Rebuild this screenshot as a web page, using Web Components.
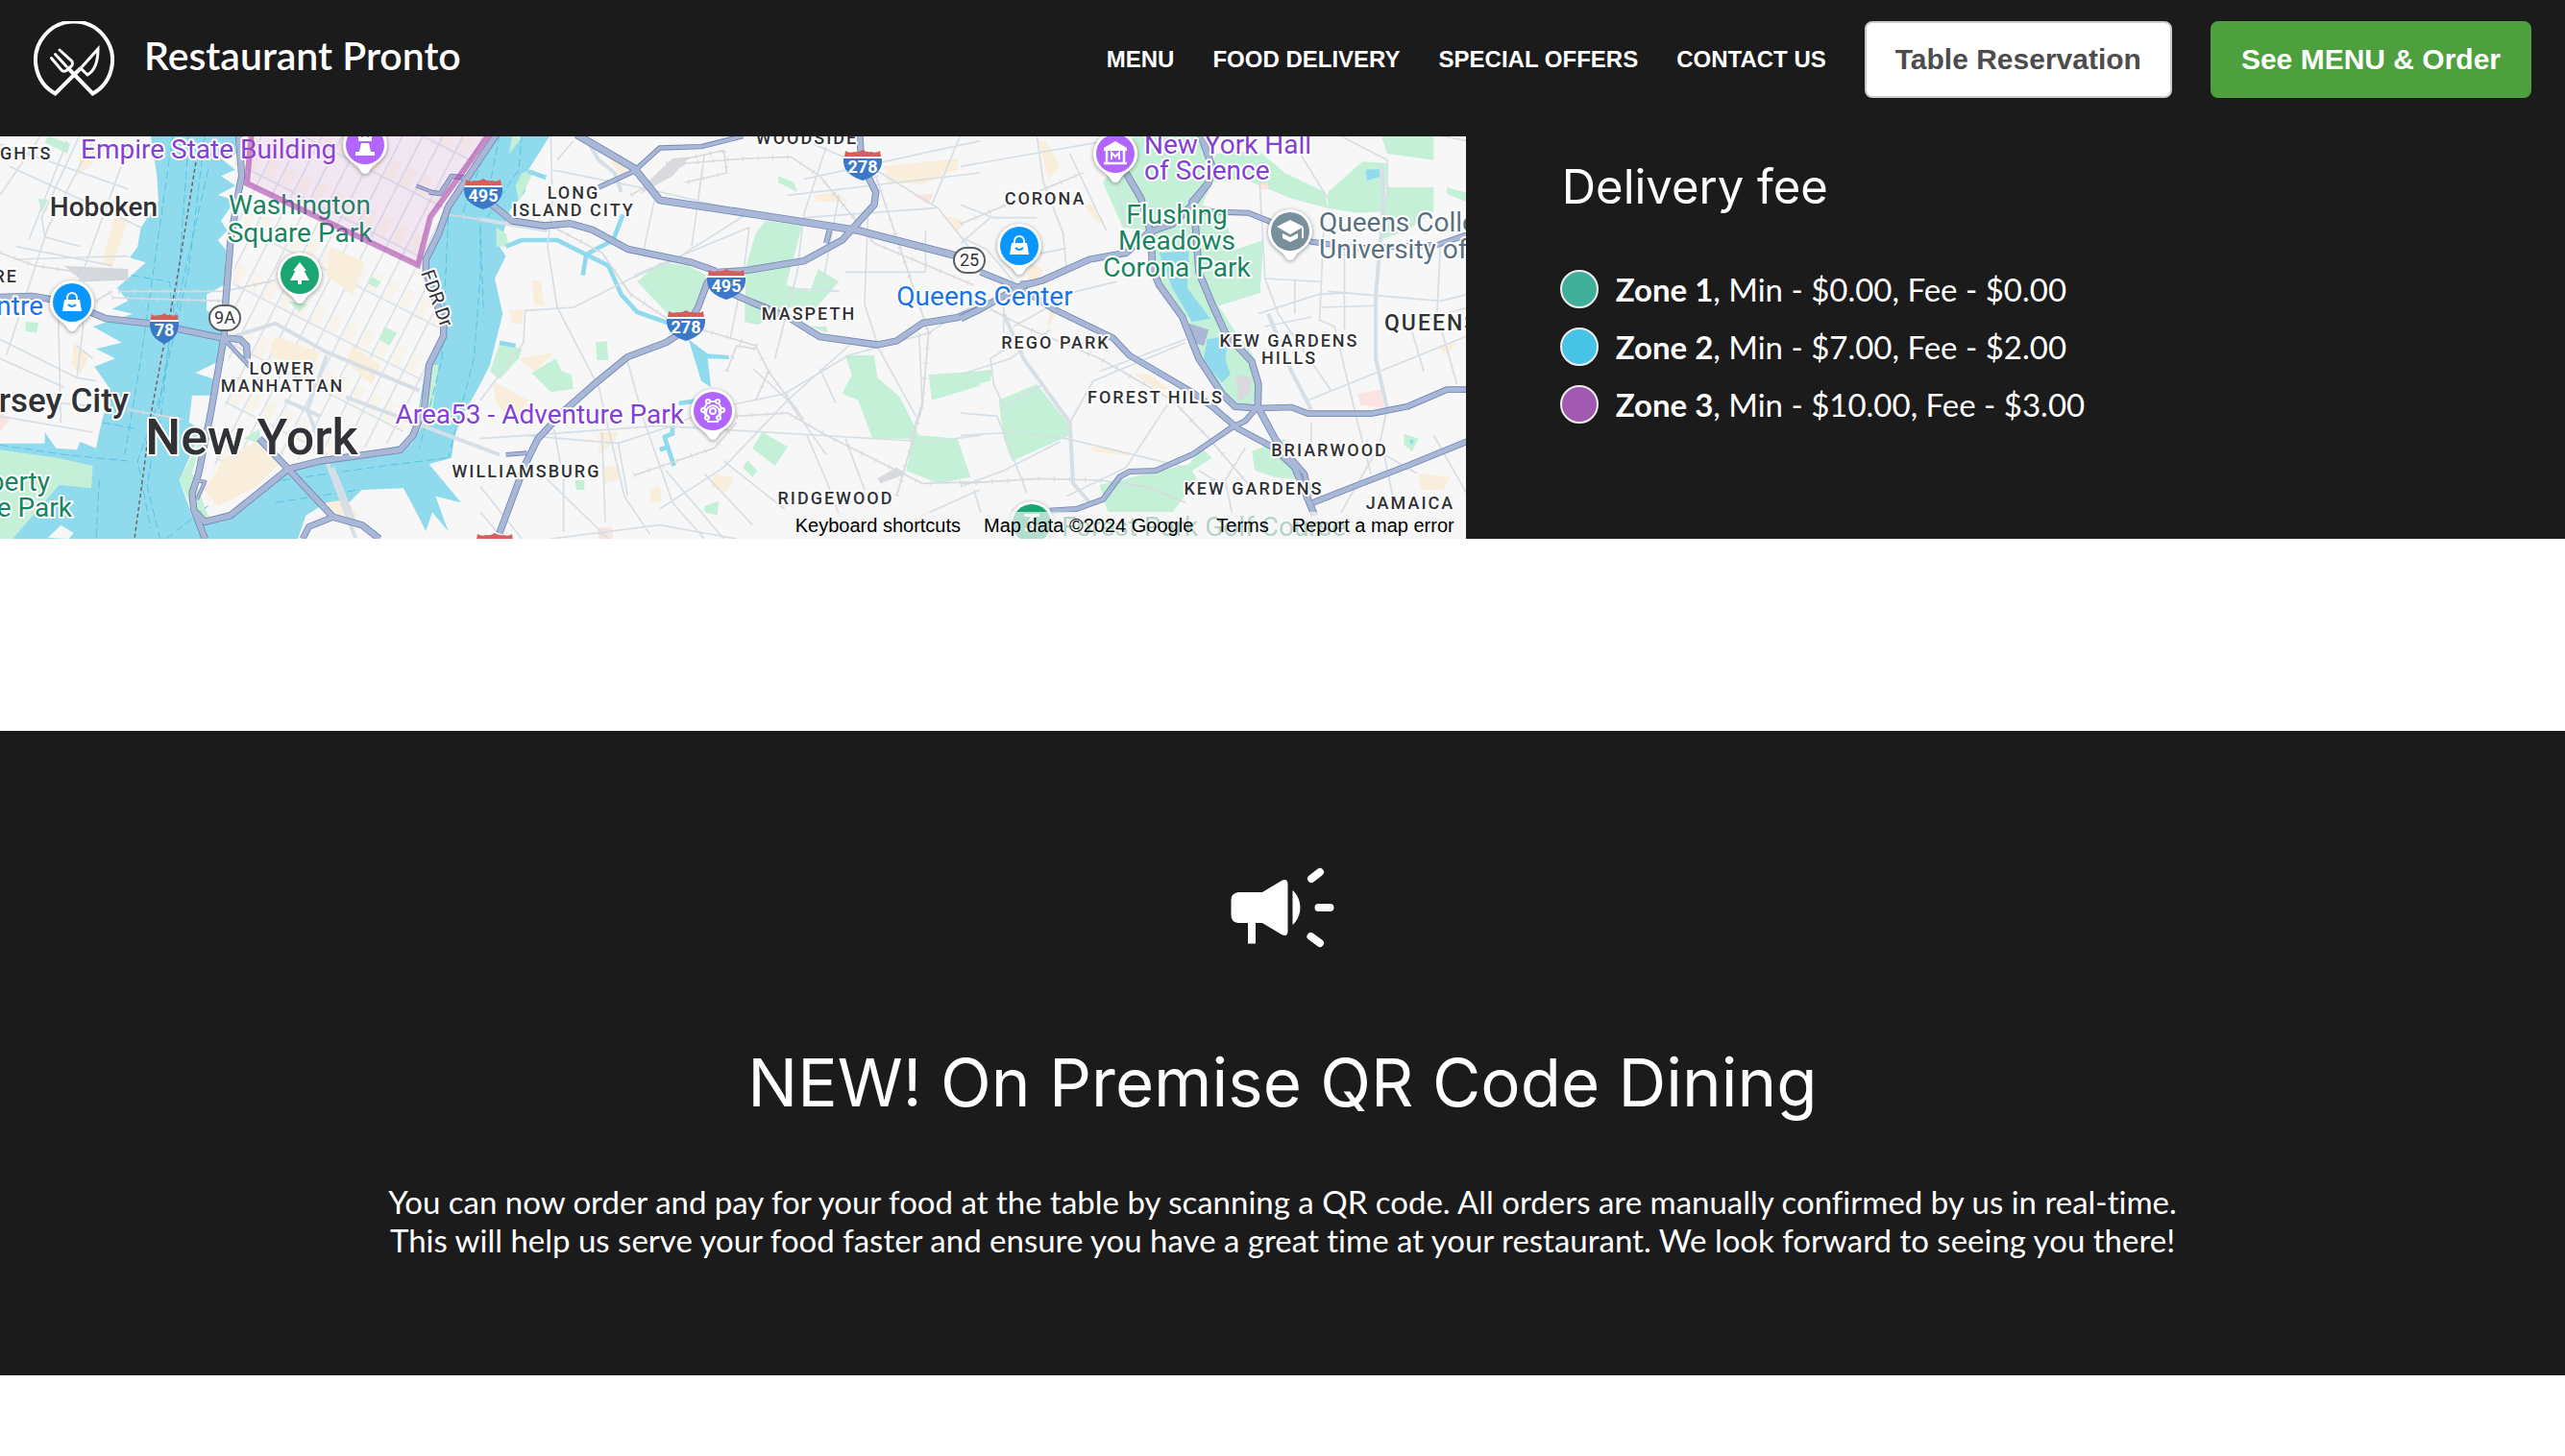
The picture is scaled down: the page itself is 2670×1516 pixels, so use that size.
<!DOCTYPE html>
<html lang="en">
<head>
<meta charset="utf-8">
<title>Restaurant Pronto</title>
<style>
    body {
        margin: 0;
        background: #fff;
        color: #fff;
        font-family: Lato, "Open Sans", sans-serif;
        font-variant-ligatures: none;
    }
</style>
</head>
<body>

<site-header>
    <nav-link href="#menu">MENU</nav-link>
    <nav-link href="#delivery">FOOD DELIVERY</nav-link>
    <nav-link href="#offers">SPECIAL OFFERS</nav-link>
    <nav-link href="#contact">CONTACT US</nav-link>
    <action-button>Table Reservation</action-button>
    <action-button kind="primary">See MENU &amp; Order</action-button>
</site-header>

<delivery-section>
    <delivery-map slot="map"></delivery-map>
    <delivery-zone color="#41b09b" name="Zone 1">Min - $0.00, Fee - $0.00</delivery-zone>
    <delivery-zone color="#46c3e5" name="Zone 2">Min - $7.00, Fee - $2.00</delivery-zone>
    <delivery-zone color="#a259b2" name="Zone 3">Min - $10.00, Fee - $3.00</delivery-zone>
</delivery-section>

<promo-section>
    <span slot="title">NEW! On Premise QR Code Dining</span>
    You can now order and pay for your food at the table by scanning a QR code. All orders are manually confirmed by us in real-time.<br>
    This will help us serve your food faster and ensure you have a great time at your restaurant. We look forward to seeing you there!
</promo-section>

<script>
class SiteHeader extends HTMLElement {

    constructor() {
        super();
        this.attachShadow({ mode: "open" });
    }

    connectedCallback() {
        this.render();
    }

    style() {
        return `
            :host {
                display: block;
                background: #1b1b1b;
            }
            header {
                display: flex;
                align-items: flex-start;
                justify-content: space-between;
                padding: 22px 35px 40px;
            }
            .brand {
                display: flex;
                gap: 31px;
                color: #fff;
                text-decoration: none;
                font-size: 41px;
                font-weight: 600;
                line-height: 72px;
            }
            .brand svg {
                width: 84px;
                height: 80px;
            }
            nav {
                display: flex;
                align-items: center;
                gap: 40px;
            }
        `;
    }

    render() {
        this.shadowRoot.innerHTML = `
            <style>${this.style()}</style>
            <header>
                <a class="brand" href="#">
                    <svg viewBox="35 22 84 80" fill="none" stroke="#fff" stroke-width="3" aria-hidden="true">
                        <path stroke-width="4" d="M84 71 L57.500 97.500 A40 40 0 1 1 96.500 97.500 L70 70"/>
                        <path d="M84 71 L102 51 C102 64 98 74 91 78 L84 71"/>
                        <path stroke-linecap="round" d="M53.500 60.500 L64 73 Q67 76 71 72 L75 68 Q76 66 75 64 L62 52 M57.500 56.500 L69 69"/>
                    </svg>
                    <span>Restaurant Pronto</span>
                </a>
                <nav><slot></slot></nav>
            </header>
        `;
    }
}

class NavLink extends HTMLElement {

    connectedCallback() {
        this.attachShadow({ mode: "open" }).innerHTML = `
            <style>
                :host { display: block; }
                a {
                    display: block;
                    color: #fff;
                    text-decoration: none;
                    font: bold 24px/80px "Liberation Sans", Arial, sans-serif;
                    white-space: nowrap;
                }
            </style>
            <a href="${this.getAttribute("href")}"><slot></slot></a>
        `;
    }
}

class ActionButton extends HTMLElement {

    connectedCallback() {
        this.attachShadow({ mode: "open" }).innerHTML = `
            <style>
                :host { display: block; }
                button {
                    display: block;
                    box-sizing: border-box;
                    height: 80px;
                    padding: 0 30px;
                    border: 2px solid #ccc;
                    border-radius: 8px;
                    background: #fff;
                    color: #4d4d4d;
                    font: bold 30px "Liberation Sans", Arial, sans-serif;
                    white-space: nowrap;
                    cursor: pointer;
                }
                :host([kind="primary"]) button {
                    border-color: #4ea03e;
                    background: #4ea03e;
                    color: #fff;
                }
            </style>
            <button type="button"><slot></slot></button>
        `;
    }
}

class DeliverySection extends HTMLElement {

    connectedCallback() {
        this.attachShadow({ mode: "open" }).innerHTML = `
            <style>
                :host {
                    display: grid;
                    grid-template-columns: 4fr 3fr;
                    background: #1b1b1b;
                }
                .info {
                    padding: 20px 98px;
                }
                h2 {
                    margin: 0 0 53px;
                    padding-left: 2px;
                    font: 400 49px/66px Inter, sans-serif;
                }
                .zones {
                    display: grid;
                    gap: 20px;
                }
            </style>
            <slot name="map"></slot>
            <div class="info">
                <h2>Delivery fee</h2>
                <div class="zones"><slot></slot></div>
            </div>
        `;
    }
}

class DeliveryZone extends HTMLElement {

    connectedCallback() {
        this.attachShadow({ mode: "open" }).innerHTML = `
            <style>
                :host {
                    display: flex;
                    align-items: center;
                    gap: 18px;
                    font-size: 33px;
                    line-height: 40px;
                }
                .dot {
                    box-sizing: border-box;
                    width: 40px;
                    height: 40px;
                    border: 2px solid #eee;
                    border-radius: 50%;
                    background: ${this.getAttribute("color")};
                }
            </style>
            <span class="dot"></span>
            <span><b>${this.getAttribute("name")}</b>, <slot></slot></span>
        `;
    }
}

class PromoSection extends HTMLElement {

    connectedCallback() {
        this.attachShadow({ mode: "open" }).innerHTML = `
            <style>
                :host {
                    display: flex;
                    flex-direction: column;
                    align-items: center;
                    margin-top: 200px;
                    padding: 124px 40px 121px;
                    background: #1b1b1b;
                    text-align: center;
                }
                svg {
                    width: 120px;
                    height: 120px;
                }
                h2 {
                    margin: 74px 0 56px;
                    font: 400 69px/96px Inter, sans-serif;
                }
                p {
                    margin: 0;
                    font-size: 33px;
                    line-height: 40px;
                }
            </style>
            <svg viewBox="1275 885 120 120" fill="#fff" aria-hidden="true">
                <path d="M1289 929 H1314 L1334 917 Q1340 914 1340.500 920 V970 Q1340 976 1334 973 L1314 961 H1307 V982.500 H1299 V961 H1289 Q1281.500 960 1281.500 953 V937 Q1281.500 930 1289 929 Z"/>
                <path d="M1345.500 927 C1356 936 1356 954 1345.500 963 Z"/>
                <path fill="none" stroke="#fff" stroke-width="8" stroke-linecap="round" d="M1365 915 L1374 908 M1372.500 945 H1384.500 M1364.500 975 L1374 982"/>
            </svg>
            <h2><slot name="title"></slot></h2>
            <p><slot></slot></p>
        `;
    }
}

// Glyphs are drawn round the centre of the pin head
const PIN_GLYPHS = {
    tree: `<path d="M0 -13 L7 -4 H4.500 L10 6 H2 V10 H-2 V6 H-10 L-4.500 -4 H-7 Z"/>`,
    bag: `<path d="M-8 -3 H8 L10 9 H-10 Z"/><path fill="none" stroke="#fff" stroke-width="2" d="M-5 -3 V-5 A5 5 0 0 1 5 -5 V-3"/><path fill="none" stroke="var(--pin)" stroke-width="2" d="M-4 2 Q0 6 4 2"/>`,
    rook: `<path d="M-7 -12 H-4 V-8 H-2 V-12 H2 V-8 H4 V-12 H7 V-4 H-7 Z M-4 -2 H4 L6 7 H10 V11 H-10 V7 H-6 Z"/>`,
    wheel: `<g fill="none" stroke="#fff" stroke-width="2"><path d="M-4 7 A7 7 0 1 1 4 7"/><circle r="3"/><circle cx="-5" cy="-10" r="2"/><circle cx="5" cy="-10" r="2"/><circle cx="-10" cy="-1" r="2"/><circle cx="10" cy="-1" r="2"/><circle cx="-6" cy="7" r="2"/><circle cx="6" cy="7" r="2"/><path d="M-3 -10 H3 M-6 -8 L-9 -3 M6 -8 L9 -3 M-9 1 L-7 5 M9 1 L7 5 M-6 11 H6"/></g>`,
    museum: `<g fill="none" stroke="#fff" stroke-width="2.500"><path d="M-9 -3 V9 M9 -3 V9 M-12 10 H12"/><path stroke-width="2" d="M-4 6 V-1 L0 3 L4 -1 V6"/></g><path d="M-12 -6 L0 -13 L12 -6 V-3 H-12 Z"/>`,
    college: `<path d="M-14 -5 L0 -12 L14 -5 L0 3 Z M-8 2 L0 6 L8 2 V7 L0 11 L-8 7 Z M12 -4 H14 V7 H12 Z"/>`,
    golf: `<path d="M-8 -10 H8 V-7 H3 L0 -3 L6 3 V8 H-7 V5 H2 L-4 -2 L-1 -7 H-8 Z"/>`
};

class MapPin extends HTMLElement {

    connectedCallback() {
        this.attachShadow({ mode: "open" }).innerHTML = `
            <style>
                :host {
                    position: absolute;
                    width: 60px;
                    height: 64px;
                    margin: -30px 0 0 -30px;
                }
                svg {
                    display: block;
                    filter: drop-shadow(0 1px 2px rgba(0, 0, 0, .4));
                }
            </style>
            <svg width="60" height="64" viewBox="-30 -30 60 64" style="--pin: ${this.getAttribute("color")}" aria-hidden="true">
                <path fill="#fff" d="M0 30 C-3 30 -4 28 -6 25 C-10 19 -23 15 -23 0 A23 23 0 0 1 23 0 C23 15 10 19 6 25 C4 28 3 30 0 30 Z"/>
                <circle r="20" fill="var(--pin)"/>
                <g fill="#fff">${PIN_GLYPHS[this.getAttribute("glyph")]}</g>
            </svg>
        `;
    }
}

class RoadShield extends HTMLElement {

    connectedCallback() {
        const num = this.getAttribute("num");
        const wide = num.length > 2;
        this.attachShadow({ mode: "open" }).innerHTML = `
            <style>
                :host {
                    position: absolute;
                    width: 40px;
                    height: 32px;
                    margin: -16px 0 0 -20px;
                }
                svg { display: block; }
                text {
                    font: bold 18px Roboto, sans-serif;
                    text-anchor: middle;
                }
                .state { font-weight: 400; }
            </style>
            <svg width="40" height="32" viewBox="-20 -16 40 32">
                ${this.hasAttribute("state") ? `
                    <rect x="-16" y="-13" width="32" height="26" rx="13" fill="#fff" stroke="#5c6166" stroke-width="2"/>
                    <text class="state" y="6" fill="#333">${num}</text>
                ` : `
                    <g transform="scale(${wide ? 1 : 0.75} 1)">
                        <path fill="#d65d5a" d="M-18 -15 Q-14 -12 -9 -14 Q-4 -13 0 -16 Q4 -13 9 -14 Q14 -12 18 -15 L19 -9 H-19 Z"/>
                        <path fill="#fff" d="M-19 -9 H19 L20 -6 H-20 Z"/>
                        <path fill="#3b78c8" d="M-20 -7 H20 C21 6 12 12 0 16 C-12 12 -21 6 -20 -7 Z"/>
                    </g>
                    <text y="8" fill="#fff">${num}</text>
                `}
            </svg>
        `;
    }
}

// The canvas is drawn in three tiles, three units to the pixel
const TILES = [
    {
        place: "translate(0 -2) scale(.33333)",
        shapes: [
            ["#90daee", "470,0 490,130 495,210 440,290 430,350 405,385 455,400 410,440 365,480 400,520 350,545 415,560 290,600 380,650 300,670 360,700 295,725 340,790 330,850 310,930 300,980 250,960 240,985 175,980 140,930 140,965 0,965 0,1263 930,1263 955,1190 1020,1150 1090,1150 1130,1110 1260,1105 1300,1180 1330,1240 1350,1180 1400,1240 1360,1130 1440,1150 1340,1030 1410,1010 1420,940 1450,870 1505,770 1530,720 1570,560 1545,450 1580,380 1560,350 1590,240 1640,180 1650,110 1720,0"],
            ["#c3f0d6", "0,985 180,1010 290,1035 285,1105 185,1095 40,1263 0,1263"],
            ["#f7f7f7", "735,0 740,60 690,75 735,110 690,130 735,160 680,190 735,205 690,270 710,300 680,330 705,360 700,470 645,500 645,550 695,570 690,640 680,710 610,745 670,765 660,815 600,815 590,900 630,920 560,1080 600,1190 640,1200 700,1195 860,1080 900,1040 1100,1000 1260,970 1300,900 1320,780 1375,640 1380,590 1325,420 1370,330 1400,230 1560,0"],
            ["url(#blocks)", "735,0 735,350 720,600 700,900 640,1170 900,1020 1240,960 1310,840 1370,620 1330,400 1400,200 1560,0"],
            ["#f7f7f7", "150,1260 190,1220 230,1245 215,1263"],
            ["#c3f0d6", "1340,720 1370,720 1350,860 1280,975 1310,850"],
            ["#c3f0d6", "560,1080 640,920 600,1060 650,1190 700,1210 620,1215"],
            ["#c3f0d6", "900,520 960,530 935,555"],
            ["#c3f0d6", "1200,600 1240,620 1215,660 1185,640"],
            ["#c3f0d6", "1055,385 1080,400 1060,430 1040,420"],
            ["#c3f0d6", "1160,445 1190,460 1175,480 1150,465"],
            ["#c3f0d6", "80,585 120,588 115,620 80,615"],
            ["#c3f0d6", "150,5 220,30 210,60 140,25"],
            ["#c3f0d6", "120,200 150,205 130,245"],
            ["#c3f0d6", "760,950 810,920 815,965"],
            ["#f8eedb", "640,1110 700,1010 800,960 870,1030 800,1100 680,1160"],
            ["#f8eedb", "860,630 1000,680 960,760 840,680"],
            ["#f8eedb", "1030,350 1140,400 1100,500 1020,440"],
            ["#f8eedb", "1100,660 1190,720 1160,780 1080,710"],
            ["#f8eedb", "370,210 410,230 350,420 320,400"],
            ["#f8eedb", "250,60 300,20 290,90 240,130"],
            ["#f8eedb", "230,650 280,690 250,750 225,720"],
            ["#f8eedb", "1020,1150 1080,1140 1120,1190 1050,1200"],
            ["#d4d7dc", "200,410 400,420 400,455 260,460"],
            ["#fbe3e2", "0,860 30,890 0,930"]
        ],
        streets: "M130 0 L0 190 M210 20 L90 330 M300 0 L150 290 L20 690 M250 0 L130 260 L140 320 L250 350 M400 40 L240 480 L260 600 L240 760 M0 30 L400 170 M30 100 L440 290 M50 350 L350 410 M50 390 L400 380 M0 700 L200 790 M180 480 L190 900 M0 640 L240 760 L300 770 M0 820 L300 850 M0 880 L290 930 M240 660 L290 700",
        wide: "M700 640 L860 590 L1020 680 L1310 800 M1020 690 L960 860 L1110 1260 M890 830 L1000 880 M1080 820 L1560 1000 M1040 1040 L1110 1220",
        rail: "M0 370 L110 410 L310 440 M370 490 L700 490 M350 510 L700 520 M700 490 L860 455 M1400 250 L1560 275 M300 520 L350 490 M400 860 L570 890",
        ferry: "M540 0 L440 700 L390 1000 M590 0 L560 420 L520 700 L460 1100 L500 1263 M640 0 L590 420 L500 820 L430 1020 L470 1230 M650 110 L530 640 L500 900 M0 970 L200 1000 L400 1020 M410 440 L530 460 L540 620 M1400 260 L1380 700 L1310 980 M1500 280 L1500 440 L1480 700 L1400 1010 M1520 40 L1440 260 M880 1080 L1200 1035 L1400 1010 M520 1263 L650 1160 M860 1150 L1120 1110 M320 900 L430 920 M310 1080 L300 1263",
        roads: [
            [20, "745,0 755,130 745,180 720,330 705,520 700,630 660,860 620,1060 600,1120 605,1170 640,1263"],
            [20, "0,508 100,505 160,515 260,545 330,575 480,592 690,635 750,640 770,660 772,700"],
            [12, "705,645 780,725"],
            [20, "1550,0 1400,225 1370,310 1330,390 1330,430 1385,590 1385,630 1340,720 1325,850 1290,940 1250,985 1000,1020 900,1045 720,1190 640,1210 605,1175"],
            [20, "810,950 900,1045 1040,1195 1130,1220 1185,1263"],
            [18, "945,1263 965,1225 1040,1195"],
            [14, "1340,180 1375,185 1410,130 1450,135"],
            [10, "1300,160 1350,180"],
            [10, "605,1080 640,1085 615,1140"]
        ]
    },
    {
        place: "translate(500 -2) scale(.33333)",
        shapes: [
            ["#c3f0d6", "490,460 560,400 650,410 705,440 670,560 590,565"],
            ["#c3f0d6", "890,270 1005,285 955,470 1030,490 1055,420 1120,460 1050,540 940,540 870,595 825,585 830,410 860,310"],
            ["#c3f0d6", "1140,690 1230,690 1240,760 1310,820 1370,940 1490,950 1530,1070 1430,1090 1330,1050 1350,950 1225,950 1180,830 1130,810 1160,750"],
            ["#c3f0d6", "1400,750 1560,740 1560,785 1410,830"],
            ["#c3f0d6", "160,745 235,700 255,740 285,750 290,795 220,805"],
            ["#c3f0d6", "360,650 395,645 400,705 365,705"],
            ["#c3f0d6", "60,655 130,670 120,700 60,765 30,740"],
            ["#c3f0d6", "880,930 960,975 920,1035 850,980"],
            ["#c3f0d6", "820,1040 835,1018 865,1050 850,1070"],
            ["#c3f0d6", "295,1080 325,1080 325,1110 300,1110"],
            ["#c3f0d6", "700,1160 745,1145 740,1190 700,1180"],
            ["#c3f0d6", "930,130 980,150 990,180 930,150"],
            ["#c3f0d6", "1030,600 1080,600 1085,620"],
            ["#c3f0d6", "130,120 170,110 120,210 110,160"],
            ["#c3f0d6", "50,290 80,310 90,350 50,350"],
            ["#c3f0d6", "100,0 130,10 90,60"],
            ["#f8eedb", "1260,100 1490,75 1490,110 1380,155 1270,150"],
            ["#f8eedb", "1040,190 1110,180 1150,210 1050,210"],
            ["#f8eedb", "1440,250 1510,270 1490,310"],
            ["#f8eedb", "400,80 460,90 450,140"],
            ["#f8eedb", "160,455 190,460 200,540 170,530"],
            ["#f8eedb", "40,770 150,830 110,910 50,840"],
            ["#f8eedb", "120,700 230,680 170,740"],
            ["#f8eedb", "370,930 430,930 420,960 370,1000"],
            ["#f8eedb", "730,1060 790,1070 770,1120 720,1100"],
            ["#f8eedb", "380,1040 435,1035 430,1080 385,1090"],
            ["#f8eedb", "530,1110 560,1100 565,1150 530,1150"],
            ["#f8eedb", "90,550 135,545 130,590 100,590"],
            ["#fbe3e2", "365,1230 410,1225 415,1263 370,1263"],
            ["#fbe3e2", "1350,190 1415,185 1400,220"],
            ["#d8dade", "520,150 600,75 655,70 600,130 500,185"],
            ["#d8dade", "1240,1075 1300,1040 1330,1060 1250,1090"],
            ["#90daee", "650,640 710,685 775,690 778,702 710,700 720,790 690,770"]
        ],
        streets: "M220 0 L225 220 L210 350 L240 540 L370 790 L450 1130 L530 1250 M290 20 L240 80 M220 110 L520 170 L860 250 M0 830 L135 650 L140 550 L290 540 L470 450 L600 395 L830 250 M480 440 L840 290 L820 440 L780 640 M545 200 L510 360 M700 60 L660 350 M1080 40 L1010 250 L990 430 L920 700 M1040 30 L1250 120 L1430 230 L1540 370 M1010 140 L1560 20 M960 190 L1560 120 M1010 260 L1420 230 M1120 190 L1070 460 M1210 260 L1200 530 L1245 670 L1360 880 M960 480 L1120 490 M1140 430 L1390 430 L1390 300 M1560 520 L1400 620 L1150 690 L950 810 L760 850 M1150 660 L960 830 L760 1040 L560 1170 M140 940 L430 965 L600 910 L760 840 M0 950 L560 910 L1400 960 L1560 940 M380 930 L390 1210 M460 710 L510 890 L600 1150 L700 1263 M230 920 L260 1080 L260 1240 M140 1010 L400 1263 M0 1100 L130 1263 M0 1180 L70 1263 M430 960 L460 1130 M700 1060 L850 1220 M760 1020 L950 1170 M580 1050 L760 1263 M1020 940 L1080 1080 L1140 1240 M1140 950 L1200 1110 M1060 730 L1110 840 M850 730 L960 830 L1080 1000 M1380 1190 L1560 1110 M220 1263 L560 1220 L800 1263 M1370 620 L1380 840 L1340 960 M1500 0 L1410 220",
        wide: "M340 30 L370 80 L420 120 L440 180 M340 30 L400 60 M210 300 L0 265",
        rail: "M470 190 L640 90 L830 75 L970 70 L1060 130 L1230 340 L1540 470 M580 90 L760 50 L770 120 L640 150 M230 290 L380 370 L470 500 L590 580 L760 630 L860 660 L900 740 L860 830 M800 880 L960 870 L1080 940 L1380 1090 L1560 1085 M480 1065 L730 980 L800 900 M900 740 L1010 890 M1235 130 L1400 620 L1380 850 L1300 1130 M770 740 L800 660 L860 670",
        creek: "M80 350 L130 330 L240 330 L330 375 L400 410 L440 500 L490 555 L590 590 M330 375 L415 330 L445 250 M320 440 L330 380 M600 880 L600 935 L575 945 L605 1035 M620 840 L690 830 M560 985 L590 975 M60 650 L110 660 M150 115 L205 135",
        ferry: "M0 290 L10 560 M60 0 L20 210 M130 0 L120 110 L20 260",
        roads: [
            [22, "300,0 480,105 560,205 860,250 1180,300 1490,380"],
            [14, "370,165 480,115 560,42 690,38 820,5"],
            [20, "1185,0 1190,90 1235,180 1230,220 1130,330 1010,395 830,425 740,430"],
            [20, "0,190 50,230 100,270 200,285 280,278 350,298 460,358 660,400 730,425 770,490 850,525 960,570 1060,632 1240,657 1300,645 1380,590 1490,572 1570,540"],
            [20, "760,430 710,460 680,540 640,610 580,650 460,695 350,785 260,865 180,950 140,1030 60,1245"],
            [16, "1080,340 1090,300"],
            [12, "80,1000 145,995"]
        ]
    },
    {
        place: "translate(1000 -2) scale(.34435 .33333)",
        shapes: [
            ["#c3f0d6", "430,150 530,0 740,0 760,150 730,220 790,240 830,360 915,330 905,495 780,535 820,600 890,700 895,830 850,860 780,800 720,700 690,580 600,450 560,300 490,290"],
            ["#c3f0d6", "770,60 900,50 980,120 1100,180 1110,230 1000,200 860,140 750,150"],
            ["#c3f0d6", "1110,180 1215,85 1290,90 1280,240 1200,245 1110,230"],
            ["#c3f0d6", "1270,0 1430,0 1430,80 1290,60"],
            ["#c3f0d6", "1290,165 1430,165 1430,240 1350,300 1265,330"],
            ["#c3f0d6", "1470,165 1540,185 1540,215 1470,185"],
            ["#c3f0d6", "115,830 230,780 330,910 330,940 155,1020 130,950"],
            ["#c3f0d6", "0,745 95,735 90,770 0,790"],
            ["#c3f0d6", "0,990 30,1070 0,1075"],
            ["#c3f0d6", "420,1095 560,1060 690,1030 730,980 760,1010 700,1050 715,1080 640,1180 445,1180"],
            ["#c3f0d6", "880,990 980,950 1040,1080 950,1070 890,1050"],
            ["#c3f0d6", "1340,935 1385,950 1365,990 1340,970"],
            ["#90daee", "600,370 690,365 685,480 755,575 700,585 640,480"],
            ["#90daee", "745,640 810,630 800,700 815,750 790,775 760,740 735,700"],
            ["#90daee", "1225,110 1275,108 1270,130 1228,145"],
            ["#90daee", "1355,955 1370,955 1365,970"],
            ["#d8dade", "830,750 880,760 875,810 840,835"],
            ["#fbe3e2", "1200,810 1270,797 1280,855 1210,845"],
            ["#fbe3e2", "900,155 930,150 930,170 905,172"],
            ["#f8eedb", "235,20 260,25 300,100 265,140"],
            ["#f8eedb", "370,220 400,220 435,275 420,280"],
            ["#f8eedb", "520,745 570,750 630,795 590,795"],
            ["#f8eedb", "390,975 480,985 510,1005 400,990"],
            ["#f8eedb", "210,400 250,420 240,460 200,450"],
            ["#f8eedb", "1385,1060 1480,1070 1460,1110 1390,1110"],
            ["#f8eedb", "1440,660 1500,650 1470,690"],
            ["#f8eedb", "270,540 290,550 260,620"],
            ["#aab8d6", "690,590 750,610 735,660 700,650"]
        ],
        streets: "M230 0 L250 150 L310 310 L320 420 M330 60 L440 300 M440 0 L500 290 M0 100 L440 20 M0 220 L100 260 L230 260 M0 320 L80 360 L160 460 M90 260 L0 340 M200 380 L320 355 M470 460 L350 490 L160 600 M130 540 L130 620 M270 610 L150 700 L0 750 M150 660 L90 700 L100 780 L130 850 L250 780 M0 940 L170 930 L320 950 L680 1040 M0 870 L110 880 L200 1120 M0 1100 L130 1050 L300 960 M40 1110 L60 1180 M320 1130 L500 1040 L640 820 M330 900 L400 770 L680 650 M420 740 L680 640 M900 80 L920 450 L960 560 L1120 800 M1010 450 L1010 560 M920 450 L1090 460 M1100 240 L1085 580 L1130 600 L1200 900 L1240 1060 M1110 490 L1450 520 L1530 500 M900 560 L1080 500 L1170 495 M1090 540 L1250 535 M1160 350 L1160 610 M920 600 L1060 570 M1450 350 L1440 560 L1500 780 M1050 830 L1530 630 M1360 600 L1400 740 M1260 1000 L1290 850 M1060 900 L1060 1000 M1350 600 L1530 540 M990 0 L1110 200 M1140 0 L1290 80 L1290 200 M1430 0 L1530 20 M1150 1180 L1250 1000 M1310 1150 L1280 1000 L1380 1060 M1430 940 L1540 1140 M820 1180 L800 1080 L860 980 M720 1050 L800 1100",
        wide: "M130 560 L190 700 L330 900 L340 1090 L390 1150 M1270 100 L1280 200 L1255 500 L1255 700 L1290 860 M930 560 L1000 740 L1060 860",
        rail: "M0 280 L160 210 L370 120 M90 545 L190 600 L420 700 L640 830 L760 960 L900 1130 M0 1090 L240 1075 L420 1080 L560 1100 L680 1150",
        roads: [
            [20, "0,575 60,545 180,475 250,455 390,390 500,370 570,305 640,280 700,220 750,150"],
            [18, "60,430 180,480 280,545 460,635 510,690 700,805 760,850 840,920 940,975 1020,1050"],
            [20, "500,120 545,200 575,310 580,420 600,470 670,570 720,700 790,810 830,850 900,855"],
            [20, "725,0 760,100 750,150 700,210 710,290 720,430 760,530 800,620 880,710 900,780 898,850 950,950 1010,1040 1070,1190"],
            [16, "990,1000 1040,1060 1055,1130"],
            [16, "730,240 870,245 930,270 1060,335 1200,355 1440,345 1540,310"],
            [18, "900,855 1000,852 1050,872 1240,872 1350,850 1470,797 1540,797"],
            [16, "270,1175 350,1170 430,1140 480,1070 510,1053 590,1050 700,1000 820,915 860,895 890,860"],
            [18, "1065,1150 1200,1095 1350,1035 1540,955"],
            [12, "180,465 225,460"]
        ]
    }
];

// [class, x, baseline, text, anchor]
const LABELS = [
    ["area", 0, 24, "GHTS"],
    ["poi purple", 84, 23, "Empire State Building"],
    ["town", 108, 83, "Hoboken", "middle"],
    ["poi green", 312, 81, "Washington", "middle"],
    ["poi green", 312, 110, "Square Park", "middle"],
    ["area", 19, 152, "RE", "end"],
    ["poi blue", 45, 186, "ntre", "end"],
    ["area", 294, 248, "LOWER", "middle"],
    ["area", 294, 266, "MANHATTAN", "middle"],
    ["city", 134, 287, "rsey City", "end"],
    ["metro", 262, 331, "New York", "middle"],
    ["poi purple", 712, 299, "Area53 - Adventure Park", "end"],
    ["poi green", 52, 369, "berty", "end"],
    ["poi green", 75, 396, "e Park", "end"],
    ["area", 548, 355, "WILLIAMSBURG", "middle"],
    ["area", 597, 65, "LONG", "middle"],
    ["area", 597, 83, "ISLAND CITY", "middle"],
    ["area", 840, 8, "WOODSIDE", "middle"],
    ["area", 842, 191, "MASPETH", "middle"],
    ["area", 870, 383, "RIDGEWOOD", "middle"],
    ["poi blue", 1025, 176, "Queens Center", "middle"],
    ["poi purple", 1191, 18, "New York Hall"],
    ["poi purple", 1191, 45, "of Science"],
    ["area", 1088, 71, "CORONA", "middle"],
    ["poi green", 1225, 91, "Flushing", "middle"],
    ["poi green", 1225, 118, "Meadows", "middle"],
    ["poi green", 1225, 146, "Corona Park", "middle"],
    ["poi slate", 1373, 99, "Queens College"],
    ["poi slate", 1373, 127, "University of"],
    ["borough", 1441, 202, "QUEENS"],
    ["area", 1342, 219, "KEW GARDENS", "middle"],
    ["area", 1342, 237, "HILLS", "middle"],
    ["area", 1099, 221, "REGO PARK", "middle"],
    ["area", 1203, 278, "FOREST HILLS", "middle"],
    ["area", 1384, 333, "BRIARWOOD", "middle"],
    ["area", 1305, 373, "KEW GARDENS", "middle"],
    ["area", 1468, 388, "JAMAICA", "middle"],
    ["poi green", 1105, 416, "Forest Park Golf Course"]
];

class DeliveryMap extends HTMLElement {

    constructor() {
        super();
        this.attachShadow({ mode: "open" });
    }

    connectedCallback() {
        this.render();
    }

    style() {
        return `
            :host {
                display: flex;
                flex-direction: column;
                justify-content: flex-end;
                align-items: flex-end;
                position: relative;
                height: 419px;
                overflow: hidden;
                background: #f7f7f7;
            }
            .canvas {
                position: absolute;
                top: 0;
                left: 0;
            }
            .canvas text {
                font-family: Roboto, sans-serif;
                paint-order: stroke;
                stroke: #fff;
                stroke-width: 4px;
                stroke-linejoin: round;
                fill: #303236;
            }
            .canvas .poi { font-size: 28px; }
            .canvas .area { font-size: 18px; font-weight: 500; letter-spacing: 2px; }
            .canvas .borough { font-size: 23px; font-weight: 500; letter-spacing: 2px; }
            .canvas .town { font-size: 28px; font-weight: 500; }
            .canvas .city { font-size: 35px; font-weight: 500; }
            .canvas .metro { font-size: 52px; font-weight: 500; }
            .canvas .road { font-size: 20px; }
            .canvas .purple { fill: #8440d6; }
            .canvas .green { fill: #188560; }
            .canvas .blue { fill: #1a73e8; }
            .canvas .slate { fill: #587080; }
            .legal {
                display: flex;
                position: relative;
                background: rgba(245, 245, 245, .7);
                font: 20px/28px "Liberation Sans", Arial, sans-serif;
                color: #000;
            }
            .legal > * {
                padding: 0 12px;
                border: 0;
                background: none;
                color: inherit;
                font: inherit;
                text-decoration: none;
                white-space: nowrap;
            }
        `;
    }

    tile(t) {
        const shapes = t.shapes.map(([fill, pts]) => `<polygon fill="${fill}" points="${pts}"/>`).join("");
        const lines = (color, width) => t.roads
            .map(([w, pts]) => `<polyline stroke="${color}" stroke-width="${w + width}" points="${pts}"/>`)
            .join("");

        return `
            <g transform="${t.place}" fill="none" stroke-linejoin="round">
                <g>${shapes}</g>
                ${t.creek ? `<path stroke="#90daee" stroke-width="14" d="${t.creek}"/>` : ""}
                ${t.ferry ? `<path stroke="#55c3e2" stroke-width="3" stroke-dasharray="26 12" d="${t.ferry}"/>` : ""}
                <path stroke="#d6dfe6" stroke-width="5" d="${t.streets}"/>
                <path stroke="#d6dfe6" stroke-width="12" d="${t.wide}"/>
                <path stroke="#d8dade" stroke-width="5" d="${t.rail}"/>
                <path stroke="#d8dade" stroke-width="16" stroke-dasharray="3 44" d="${t.rail}"/>
                ${lines("#7285b5", 2)}
                ${lines("#a9b8d6", -3)}
            </g>
        `;
    }

    label([cls, x, y, text, anchor = "start"]) {
        return `<text class="${cls}" x="${x}" y="${y}" text-anchor="${anchor}">${text}</text>`;
    }

    render() {
        this.shadowRoot.innerHTML = `
            <style>${this.style()}</style>
            <svg class="canvas" width="1540" height="419" role="img" aria-label="Delivery area map">
                <defs>
                    <pattern id="blocks" width="56" height="170" patternUnits="userSpaceOnUse" patternTransform="rotate(27)">
                        <rect x="8" y="20" width="30" height="60" fill="#f8eedb" opacity=".45"/>
                        <path d="M2 0 V170 M0 85 H56" stroke="#d6dfe6" stroke-width="5"/>
                    </pattern>
                </defs>
                ${TILES.map((t) => this.tile(t)).join("")}
                <path fill="none" stroke="#6b6468" stroke-width="1.500" stroke-dasharray="4 3" d="M205 20 L184 150 L170 220 L157 290 L148 360 L140 419"/>
                <g>
                    ${LABELS.map((l) => this.label(l)).join("")}
                    <text class="road" transform="translate(438 142) rotate(70)">FDR Dr</text>
                </g>
                <path fill="#c35ac0" fill-opacity=".1" stroke="#aa46aa" stroke-opacity=".6" stroke-width="6" d="M262 -6 L257 49 L435 134 L448 84 L512 -6"/>
            </svg>

            <road-shield num="495" style="left: 503px; top: 60px"></road-shield>
            <road-shield num="78" style="left: 171px; top: 200px"></road-shield>
            <road-shield num="278" style="left: 898px; top: 30px"></road-shield>
            <road-shield num="495" style="left: 756px; top: 154px"></road-shield>
            <road-shield num="278" style="left: 714px; top: 197px"></road-shield>
            <road-shield num="278" style="left: 515px; top: 429px"></road-shield>
            <road-shield num="9A" state style="left: 234px; top: 189px"></road-shield>
            <road-shield num="25" state style="left: 1009px; top: 129px"></road-shield>

            <map-pin glyph="rook" color="#b266ff" style="left: 380px; top: 9px"></map-pin>
            <map-pin glyph="tree" color="#1aa672" style="left: 312px; top: 144px"></map-pin>
            <map-pin glyph="bag" color="#0a96ff" style="left: 75px; top: 173px"></map-pin>
            <map-pin glyph="wheel" color="#b266ff" style="left: 742px; top: 286px"></map-pin>
            <map-pin glyph="museum" color="#b266ff" style="left: 1161px; top: 18px"></map-pin>
            <map-pin glyph="bag" color="#0a96ff" style="left: 1061px; top: 114px"></map-pin>
            <map-pin glyph="college" color="#78909c" style="left: 1343px; top: 99px"></map-pin>
            <map-pin glyph="golf" color="#1aa672" style="left: 1074px; top: 403px"></map-pin>

            <div class="legal">
                <button type="button">Keyboard shortcuts</button>
                <span>Map data ©2024 Google</span>
                <a href="#terms">Terms</a>
                <a href="#report">Report a map error</a>
            </div>
        `;
    }
}

customElements.define("site-header", SiteHeader);
customElements.define("nav-link", NavLink);
customElements.define("action-button", ActionButton);
customElements.define("delivery-section", DeliverySection);
customElements.define("delivery-zone", DeliveryZone);
customElements.define("promo-section", PromoSection);
customElements.define("map-pin", MapPin);
customElements.define("road-shield", RoadShield);
customElements.define("delivery-map", DeliveryMap);
</script>
</body>
</html>
